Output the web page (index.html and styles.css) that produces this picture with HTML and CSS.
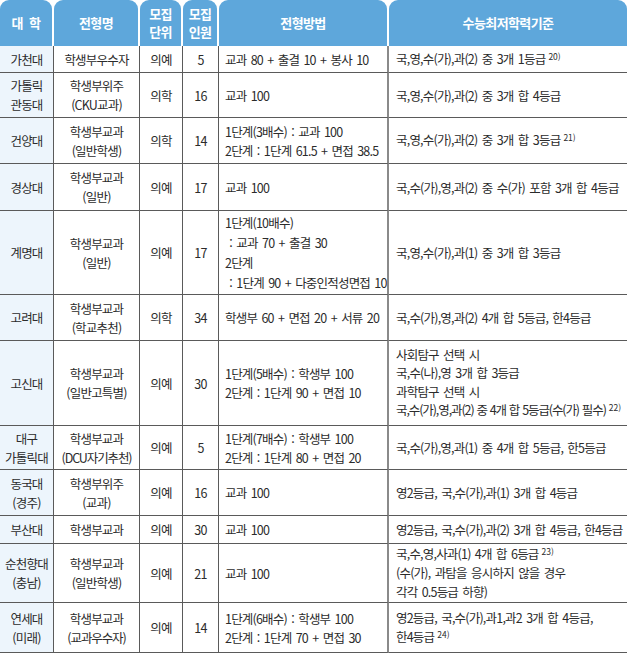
FILE: index.html
```html
<!DOCTYPE html>
<html lang="ko">
<head>
<meta charset="utf-8">
<link rel="stylesheet" href="styles.css">
</head>
<body>
<div class="tbl">
  <div class="h">대&nbsp;&nbsp;학</div>
  <div class="h">전형명</div>
  <div class="h">모집<br>단위</div>
  <div class="h">모집<br>인원</div>
  <div class="h">전형방법</div>
  <div class="h last">수능최저학력기준</div>

  <div class="c u">가천대</div>
  <div class="c"><div>학생부우수자</div></div>
  <div class="c">의예</div>
  <div class="c">5</div>
  <div class="c m"><div>교과 80 + 출결 10 + 봉사 10</div></div>
  <div class="c s"><div>국,영,수(가),과(2) 중 3개 1등급<span class="sup">20)</span></div></div>

  <div class="c u"><div>가톨릭<br>관동대</div></div>
  <div class="c"><div>학생부위주<br>(CKU교과)</div></div>
  <div class="c">의학</div>
  <div class="c">16</div>
  <div class="c m"><div>교과 100</div></div>
  <div class="c s"><div>국,영,수(가),과(2) 중 3개 합 4등급</div></div>

  <div class="c u">건양대</div>
  <div class="c"><div>학생부교과<br>(일반학생)</div></div>
  <div class="c">의학</div>
  <div class="c">14</div>
  <div class="c m"><div>1단계(3배수) : 교과 100<br>2단계 : 1단계 61.5 + 면접 38.5</div></div>
  <div class="c s"><div>국,영,수(가),과(2) 중 3개 합 3등급<span class="sup">21)</span></div></div>

  <div class="c u">경상대</div>
  <div class="c"><div>학생부교과<br>(일반)</div></div>
  <div class="c">의예</div>
  <div class="c">17</div>
  <div class="c m"><div>교과 100</div></div>
  <div class="c s"><div>국,수(가),영,과(2) 중 수(가) 포함 3개 합 4등급</div></div>

  <div class="c u">계명대</div>
  <div class="c"><div>학생부교과<br>(일반)</div></div>
  <div class="c">의예</div>
  <div class="c">17</div>
  <div class="c m tall"><div>1단계(10배수)<br>&nbsp;: 교과 70 + 출결 30<br>2단계<br>&nbsp;: 1단계 90 + 다중인적성면접 10</div></div>
  <div class="c s"><div>국,영,수(가),과(1) 중 3개 합 3등급</div></div>

  <div class="c u">고려대</div>
  <div class="c"><div>학생부교과<br>(학교추천)</div></div>
  <div class="c">의학</div>
  <div class="c">34</div>
  <div class="c m"><div>학생부 60 + 면접 20 + 서류 20</div></div>
  <div class="c s"><div>국,수(가),영,과(2) 4개 합 5등급, 한4등급</div></div>

  <div class="c u">고신대</div>
  <div class="c"><div>학생부교과<br>(일반고특별)</div></div>
  <div class="c">의예</div>
  <div class="c">30</div>
  <div class="c m"><div>1단계(5배수) : 학생부 100<br>2단계 : 1단계 90 + 면접 10</div></div>
  <div class="c s short"><div>사회탐구 선택 시<br>국,수(나),영 3개 합 3등급<br>과학탐구 선택 시<br><span class="tight">국,수(가),영,과(2) 중 4개 합 5등급(수(가) 필수)</span><span class="sup">22)</span></div></div>

  <div class="c u"><div>대구<br>가톨릭대</div></div>
  <div class="c"><div>학생부교과<br><span class="tight">(DCU자기추천)</span></div></div>
  <div class="c">의예</div>
  <div class="c">5</div>
  <div class="c m"><div>1단계(7배수) : 학생부 100<br>2단계 : 1단계 80 + 면접 20</div></div>
  <div class="c s"><div>국,수(가),영,과(1) 중 4개 합 5등급, 한5등급</div></div>

  <div class="c u"><div>동국대<br>(경주)</div></div>
  <div class="c"><div>학생부위주<br>(교과)</div></div>
  <div class="c">의예</div>
  <div class="c">16</div>
  <div class="c m"><div>교과 100</div></div>
  <div class="c s"><div>영2등급, 국,수(가),과(1) 3개 합 4등급</div></div>

  <div class="c u">부산대</div>
  <div class="c"><div>학생부교과</div></div>
  <div class="c">의예</div>
  <div class="c">30</div>
  <div class="c m"><div>교과 100</div></div>
  <div class="c s"><div>영2등급, 국,수(가),과(2) 3개 합 4등급, 한4등급</div></div>

  <div class="c u"><div>순천향대<br>(충남)</div></div>
  <div class="c"><div>학생부교과<br>(일반학생)</div></div>
  <div class="c">의예</div>
  <div class="c">21</div>
  <div class="c m"><div>교과 100</div></div>
  <div class="c s short"><div>국,수,영,사과(1) 4개 합 6등급<span class="sup">23)</span><br>(수(가), 과탐을 응시하지 않을 경우<br>각각 0.5등급 하향)</div></div>

  <div class="c u"><div>연세대<br>(미래)</div></div>
  <div class="c"><div>학생부교과<br><span class="tight">(교과우수자)</span></div></div>
  <div class="c">의예</div>
  <div class="c">14</div>
  <div class="c m"><div>1단계(6배수) : 학생부 100<br>2단계 : 1단계 70 + 면접 30</div></div>
  <div class="c s"><div>영2등급, 국,수(가),과1,과2 3개 합 4등급,<br>한4등급<span class="sup">24)</span></div></div>
</div>
</body>
</html>
```

FILE: styles.css
```css
html, body {
  margin: 0;
  padding: 0;
  background: #ffffff;
}

.tbl {
  display: grid;
  width: 627px;
  grid-template-columns: 54px 86px 43px 36px 170px 238px;
  grid-template-rows: 46px 27px 45px 46px 47px 84px 46px 85px 44px 46px 28px 59px 50px;
  font-family: "Noto Sans CJK KR", "Noto Sans", sans-serif;
  font-size: 12.5px;
  letter-spacing: -0.8px;
  word-spacing: 1.6px;
  color: #2b2b2b;
}

.h {
  background: #5ea7db;
  color: #ffffff;
  font-weight: bold;
  border-radius: 9px 9px 0 0;
  margin-right: 2px;
  display: flex;
  align-items: center;
  justify-content: center;
  text-align: center;
  line-height: 18px;
  font-size: 13px;
  letter-spacing: -0.6px;
  word-spacing: 0;
}

.h.last {
  margin-right: 0;
}

.c {
  display: flex;
  flex-direction: column;
  align-items: center;
  justify-content: center;
  text-align: center;
  line-height: 19px;
  border-bottom: 1px solid #5a5a5a;
  border-right: 1px solid #5a5a5a;
  white-space: nowrap;
  overflow: hidden;
}

.c.u {
  background: #edf5fc;
}

.c.m {
  align-items: flex-start;
  text-align: left;
  padding-left: 6px;
  border-right: 2px solid #8a8a8a;
}

.c.s {
  align-items: flex-start;
  text-align: left;
  padding-left: 7px;
  border-right: none;
}

.c.tall {
  line-height: 20px;
}

.c.short {
  line-height: 18.5px;
}

.tight {
  letter-spacing: -1.1px;
  word-spacing: 0.5px;
}

.sup {
  font-size: 8.5px;
  letter-spacing: 0;
  word-spacing: 0;
  margin-left: 3px;
  position: relative;
  top: -4px;
}
```
